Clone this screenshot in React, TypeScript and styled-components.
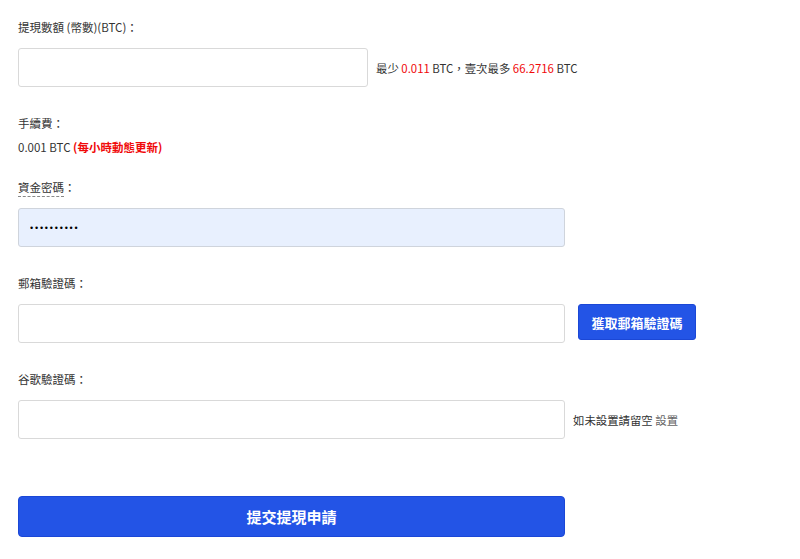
import * as React from 'react'
import styled, { createGlobalStyle, css } from 'styled-components'

const COLOR = {
  TEXT: '#333333',
  MUTED: '#666666',
  RED: '#f00a0a',
  BORDER: '#d9d9d9',
  BLUE: '#2354e6',
  BLUE_BORDER: '#1b47d6',
  AUTOFILL: '#e8f0fe',
}

const FONT = '"Noto Sans CJK TC", "Noto Sans", "Liberation Sans", sans-serif'

const GlobalStyle = createGlobalStyle`
  body {
    margin: 0;
    background: #ffffff;
    font-family: ${FONT};
    color: ${COLOR.TEXT};
  }
`

const App = () => {
  return (
    <>
      <GlobalStyle />
      <Form>
        <Field gap={17}>
          <Label>提現數額 (幣數)(BTC)：</Label>
          <Row>
            <Input width={350} />
            <Hint>
              最少 <Red>0.011</Red> BTC，壹次最多 <Red>66.2716</Red> BTC
            </Hint>
          </Row>
        </Field>

        <Field gap={26}>
          <Label>手續費：</Label>
          <FeeValue>
            0.001 BTC <RedStrong>(每小時動態更新)</RedStrong>
          </FeeValue>
        </Field>

        <Field gap={20}>
          <Label>
            <Dashed>資金密碼</Dashed>：
          </Label>
          <Row>
            <Input width={547} type="password" defaultValue="0123456789" isFilled />
          </Row>
        </Field>

        <Field gap={26}>
          <Label>郵箱驗證碼：</Label>
          <Row>
            <Input width={547} />
            <SmallButton>獲取郵箱驗證碼</SmallButton>
          </Row>
        </Field>

        <Field gap={26}>
          <Label>谷歌驗證碼：</Label>
          <Row>
            <Input width={547} />
            <Hint>
              如未設置請留空 <Muted>設置</Muted>
            </Hint>
          </Row>
        </Field>

        <Submit>提交提現申請</Submit>
      </Form>
    </>
  )
}

const Form = styled.div`
  padding: 0 0 20px 18px;
  display: flex;
  flex-direction: column;
`

const Field = styled.div<{ gap: number }>`
  margin-top: ${props => props.gap}px;
`

const Label = styled.div`
  font-size: 11.5px;
  line-height: 20px;
  margin-bottom: 11px;
`

const Dashed = styled.span`
  display: inline-block;
  line-height: 18px;
  border-bottom: 1px dashed #888;
`

const Row = styled.div`
  display: flex;
  align-items: center;
`

const Input = styled.input<{ width: number; isFilled?: boolean }>`
  box-sizing: border-box;
  width: ${props => props.width}px;
  height: 39px;
  padding: 0 10px;
  border: 1px solid ${COLOR.BORDER};
  border-radius: 3px;
  background: #fff;
  font-family: ${FONT};
  font-size: 12px;
  outline: none;

  ${props =>
    props.isFilled &&
    css`
      background: ${COLOR.AUTOFILL};
      border-color: #cfd4dc;
      padding-left: 11px;
      font-family: 'Liberation Sans', sans-serif;
      font-size: 9px;
      letter-spacing: 1.8px;
    `}
`

const Hint = styled.span`
  margin-left: 8px;
  font-size: 11.4px;
  color: ${COLOR.TEXT};
  white-space: nowrap;
`

const Red = styled.span`
  color: ${COLOR.RED};
`

const Muted = styled.span`
  color: ${COLOR.MUTED};
`

const FeeValue = styled.div`
  margin-top: -7px;
  font-size: 11.5px;
  line-height: 20px;
`

const RedStrong = styled.span`
  color: ${COLOR.RED};
  font-weight: 600;
`

const SmallButton = styled.button`
  box-sizing: border-box;
  align-self: flex-start;
  margin-left: 13px;
  width: 118px;
  height: 36px;
  border: 1px solid ${COLOR.BLUE_BORDER};
  border-radius: 3px;
  background: ${COLOR.BLUE};
  color: #fff;
  font-family: ${FONT};
  font-size: 13px;
  font-weight: 700;
  cursor: pointer;
`

const Submit = styled.button`
  box-sizing: border-box;
  margin-top: 57px;
  width: 547px;
  height: 41px;
  border: 1px solid ${COLOR.BLUE_BORDER};
  border-radius: 4px;
  background: ${COLOR.BLUE};
  color: #fff;
  font-family: ${FONT};
  font-size: 15px;
  font-weight: 700;
  cursor: pointer;
`

export default App
